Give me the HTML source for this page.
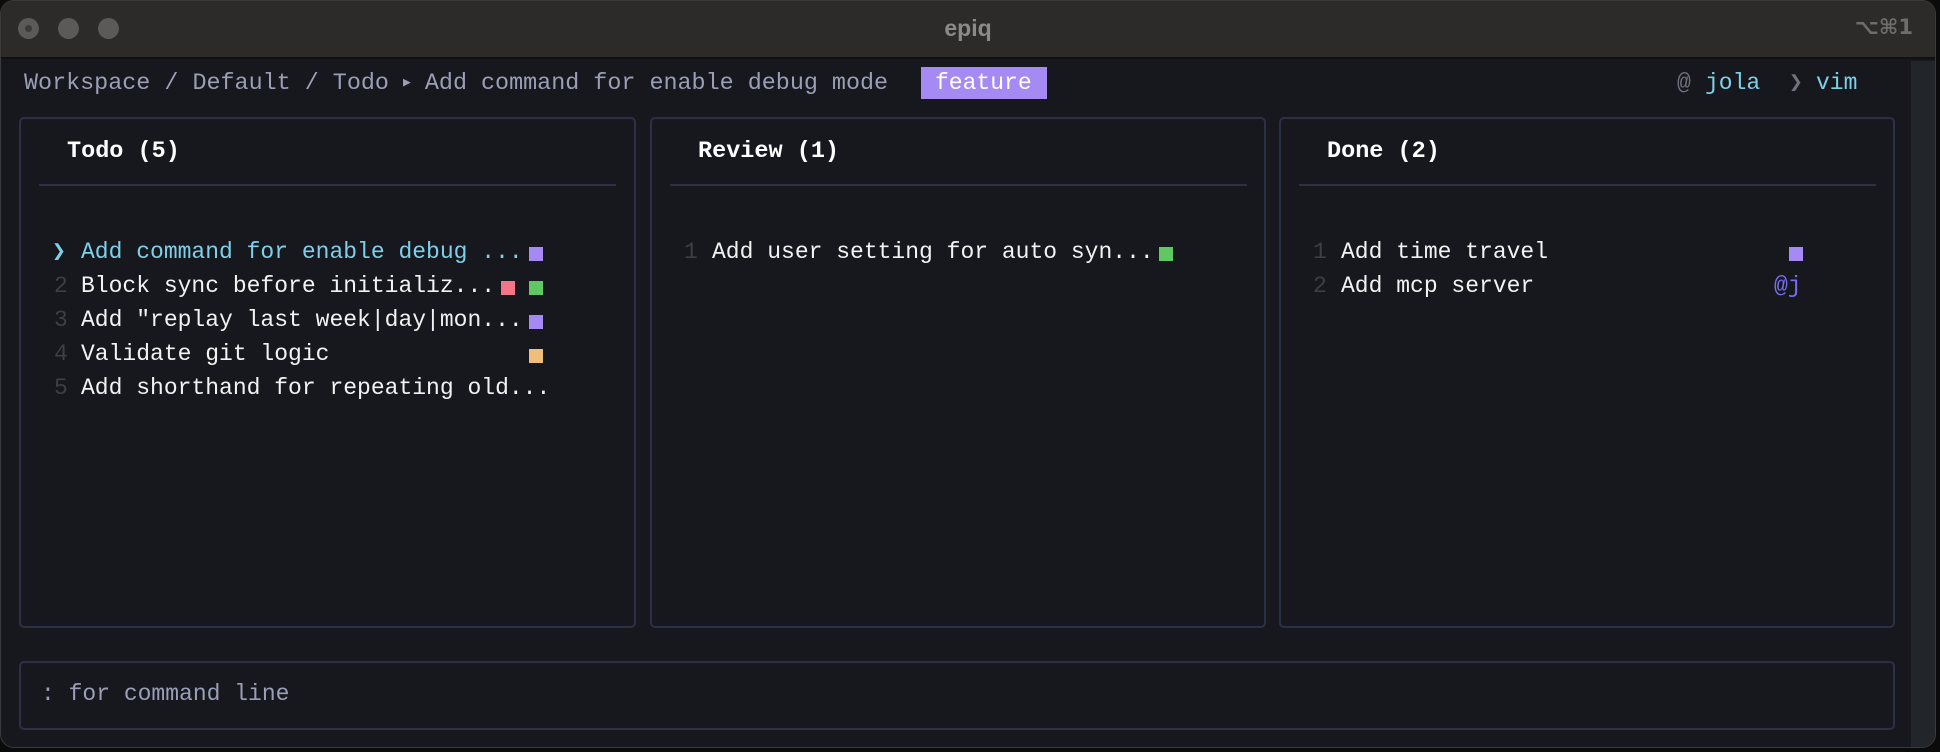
<!DOCTYPE html>
<html><head><meta charset="utf-8"><style>
*{margin:0;padding:0;box-sizing:border-box}
body{width:1940px;height:752px;background:#0b0b0c;overflow:hidden;font-family:"Liberation Mono",monospace;font-size:23px}
.win{position:absolute;left:0;top:0;width:1936px;height:748px;background:#16181d;border-radius:14px;border:1px solid #3a3a3c;overflow:hidden}
.tb{position:absolute;left:0;top:0;right:0;height:58px;background:#2c2b29;border-bottom:2px solid #111}
.dot{position:absolute;top:17px;width:21px;height:21px;border-radius:50%;background:#5b5a58}
.title{position:absolute;left:0;right:0;top:14px;text-align:center;font-family:"Liberation Sans",sans-serif;font-weight:bold;font-size:23px;color:#8b8a88}
.kbd{position:absolute;right:22px;top:14px;font-family:"DejaVu Sans",sans-serif;font-weight:bold;font-size:21px;color:#6e6d6b}
.t{position:absolute;white-space:pre;line-height:34px}
.panel{position:absolute;top:116px;height:511px;border:2px solid #2c3047;border-radius:5px}
.hdr{position:absolute;top:19px;font-family:"Liberation Mono",monospace;font-weight:bold;color:#fff;font-size:23.5px}
.rule{position:absolute;top:65px;height:2px;background:#2c3047}
.sq{position:absolute;width:14px;height:14px}
.n{color:#3c3f46}
.w{color:#f2f2f2}
</style></head><body>
<div class="win">
<div class="tb">
<div class="dot" style="left:17px"></div><div class="dot" style="left:57px"></div><div class="dot" style="left:97px"></div>
<div style="position:absolute;left:24px;top:24px;width:7px;height:7px;border-radius:50%;background:#3a3a39"></div>
<div class="title">epiq</div>
<div class="kbd">⌥⌘1</div>
</div>
<div style="position:absolute;left:1910px;top:60px;width:26px;height:688px;background:#22252a"></div>
<div class="t" style="left:23px;top:66px;color:#9a9eb6;font-size:23.4px">Workspace / Default / Todo <span style="font-size:13px;position:relative;top:-3px">▶</span> Add command for enable debug mode</div>
<div style="position:absolute;left:920px;top:66px;width:126px;height:32px;background:#a68af4"></div>
<div class="t" style="left:934px;top:65px;color:#fff">feature</div>
<div class="t" style="left:1676px;top:65px;color:#6f7380">@</div>
<div class="t" style="left:1704px;top:65px;color:#7fcfe8">jola</div>
<div class="t" style="left:1788px;top:65px;color:#6f7380">❯</div>
<div class="t" style="left:1815px;top:65px;color:#7fcfe8">vim</div>

<div class="panel" style="left:18px;width:617px">
<div class="hdr" style="left:46px">Todo (5)</div><div class="rule" style="left:18px;width:577px"></div>
</div>
<div class="panel" style="left:649px;width:616px">
<div class="hdr" style="left:46px">Review (1)</div><div class="rule" style="left:18px;width:577px"></div>
</div>
<div class="panel" style="left:1278px;width:616px">
<div class="hdr" style="left:46px">Done (2)</div><div class="rule" style="left:18px;width:577px"></div>
</div>

<div class="t" style="left:51px;top:234px;color:#7fcfe8">❯</div>
<div class="t" style="left:80px;top:234px;color:#7fcfe8">Add command for enable debug ...</div>
<div class="sq" style="left:528px;top:246px;background:#a68af4"></div>
<div class="t n" style="left:53px;top:268px">2</div><div class="t w" style="left:80px;top:268px">Block sync before initializ...</div>
<div class="sq" style="left:500px;top:280px;background:#f47488"></div><div class="sq" style="left:528px;top:280px;background:#5ec963"></div>
<div class="t n" style="left:53px;top:302px">3</div><div class="t w" style="left:80px;top:302px">Add "replay last week|day|mon...</div>
<div class="sq" style="left:528px;top:314px;background:#a68af4"></div>
<div class="t n" style="left:53px;top:336px">4</div><div class="t w" style="left:80px;top:336px">Validate git logic</div>
<div class="sq" style="left:528px;top:348px;background:#efbe7b"></div>
<div class="t n" style="left:53px;top:370px">5</div><div class="t w" style="left:80px;top:370px">Add shorthand for repeating old...</div>

<div class="t n" style="left:683px;top:234px">1</div><div class="t w" style="left:711px;top:234px">Add user setting for auto syn...</div>
<div class="sq" style="left:1158px;top:246px;background:#5ec963"></div>

<div class="t n" style="left:1312px;top:234px">1</div><div class="t w" style="left:1340px;top:234px">Add time travel</div>
<div class="sq" style="left:1788px;top:246px;background:#a68af4"></div>
<div class="t n" style="left:1312px;top:268px">2</div><div class="t w" style="left:1340px;top:268px">Add mcp server</div>
<div class="t" style="left:1773px;top:268px;color:#7a6ef0">@j</div>

<div style="position:absolute;left:18px;top:660px;width:1876px;height:69px;border:2px solid #2c3047;border-radius:5px"></div>
<div class="t" style="left:40px;top:676px;color:#9a9eb6">: for command line</div>
</div>
</body></html>
